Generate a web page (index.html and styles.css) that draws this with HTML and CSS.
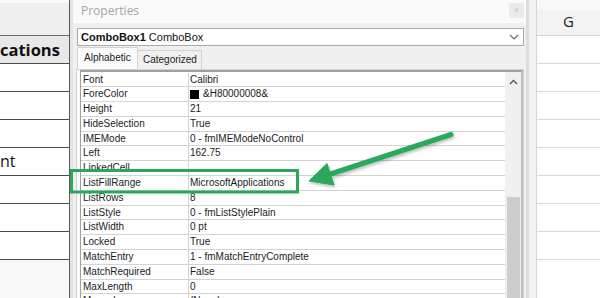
FILE: index.html
```html
<!DOCTYPE html>
<html lang="en">
<head>
    <meta charset="UTF-8">
    <title>Properties - ComboBox1</title>
    <link rel="stylesheet" href="styles.css">
</head>
<body>
    <div class="screen">
        <!-- worksheet, left part -->
        <div class="sheet-left">
            <div class="sheet-top"></div>
            <div class="cell head">cations</div>
            <div class="cell"></div>
            <div class="cell"></div>
            <div class="cell"></div>
            <div class="cell">nt</div>
            <div class="cell"></div>
            <div class="cell"></div>
            <div class="cell"></div>
            <div class="sheet-rest"></div>
        </div>
        <div class="shade"></div>

        <!-- properties window -->
        <div class="dialog">
            <div class="titlebar">
                <span class="title">Properties</span>
                <span class="close">&times;</span>
            </div>
            <div class="dialog-body">
                <div class="combo">
                    <span><b>ComboBox1</b> ComboBox</span>
                    <svg width="10" height="6" viewBox="0 0 10 6"><path d="M1 1 L5 5 L9 1" fill="none" stroke="#6b6b6b" stroke-width="1.2"/></svg>
                </div>
                <div class="tabs">
                    <div class="tab active">Alphabetic</div>
                    <div class="tab">Categorized</div>
                </div>
                <div class="tab-page">
                    <div class="grid-frame">
                        <div class="props">
                            <div class="row"><div class="name">Font</div><div class="value">Calibri</div></div>
                            <div class="row"><div class="name">ForeColor</div><div class="value"><span class="swatch"></span>&amp;H80000008&amp;</div></div>
                            <div class="row"><div class="name">Height</div><div class="value">21</div></div>
                            <div class="row"><div class="name">HideSelection</div><div class="value">True</div></div>
                            <div class="row"><div class="name">IMEMode</div><div class="value">0 - fmIMEModeNoControl</div></div>
                            <div class="row"><div class="name">Left</div><div class="value">162.75</div></div>
                            <div class="row"><div class="name">LinkedCell</div><div class="value"></div></div>
                            <div class="row"><div class="name">ListFillRange</div><div class="value">MicrosoftApplications</div></div>
                            <div class="row"><div class="name">ListRows</div><div class="value">8</div></div>
                            <div class="row"><div class="name">ListStyle</div><div class="value">0 - fmListStylePlain</div></div>
                            <div class="row"><div class="name">ListWidth</div><div class="value">0 pt</div></div>
                            <div class="row"><div class="name">Locked</div><div class="value">True</div></div>
                            <div class="row"><div class="name">MatchEntry</div><div class="value">1 - fmMatchEntryComplete</div></div>
                            <div class="row"><div class="name">MatchRequired</div><div class="value">False</div></div>
                            <div class="row"><div class="name">MaxLength</div><div class="value">0</div></div>
                            <div class="row"><div class="name">MouseIcon</div><div class="value">(None)</div></div>
                        </div>
                        <div class="scrollbar">
                            <svg class="up" width="9" height="6" viewBox="0 0 9 6"><path d="M1 5 L4.5 1.5 L8 5" fill="none" stroke="#555" stroke-width="1.4"/></svg>
                            <div class="thumb"></div>
                        </div>
                    </div>
                </div>
            </div>
        </div>

        <!-- worksheet, right part -->
        <div class="sheet-right">
            <div class="col-strip"></div>
            <div class="col-g">
                <div class="col-head">G</div>
                <div class="gcell"></div>
                <div class="gcell"></div>
                <div class="gcell"></div>
                <div class="gcell"></div>
                <div class="gcell"></div>
                <div class="gcell"></div>
                <div class="gcell"></div>
                <div class="gcell"></div>
            </div>
        </div>

        <!-- green callout -->
        <svg class="callout" width="600" height="298" viewBox="0 0 600 298">
            <defs>
                <filter id="soft" x="-10%" y="-30%" width="120%" height="160%">
                    <feDropShadow dx="1" dy="2" stdDeviation="1.5" flood-color="#000" flood-opacity="0.25"/>
                </filter>
            </defs>
            <rect x="71.5" y="170.5" width="226" height="21.5" fill="none" stroke="#29a85c" stroke-width="3"/>
            <g filter="url(#soft)" fill="#29a85c" stroke="#29a85c">
                <line x1="451" y1="134.5" x2="326" y2="175.5" stroke-width="5" stroke-linecap="round"/>
                <polygon points="309,181 327,163.5 334,185" stroke-width="1" stroke-linejoin="round"/>
            </g>
        </svg>
    </div>
</body>
</html>
```

FILE: styles.css
```css
body {
    margin: 0;
    background: #fff;
    font-family: "Liberation Sans", Arial, sans-serif;
}
.screen {
    position: relative;
    width: 600px;
    height: 298px;
    overflow: hidden;
    display: flex;
}

/* worksheet left */
.sheet-left {
    width: 69px;
    flex: none;
    display: flex;
    flex-direction: column;
    background: #f4f4f4;
    border-right: 1px solid #595959;
}
.sheet-top {
    height: 36px;
    flex: none;
    box-sizing: border-box;
    background: #efefef;
    border-top: 3px solid #fafafa;
    border-bottom: 1px solid #6d6d6d;
}
.cell {
    height: 28px;
    flex: none;
    box-sizing: border-box;
    background: #fff;
    border-bottom: 1px solid #4a4a4a;
    font-family: "Open Sans", "Liberation Sans", sans-serif;
    font-size: 16px;
    line-height: 27px;
    color: #111;
    white-space: nowrap;
}
.cell.head {
    background: #e8e8e8;
    font-weight: bold;
    font-size: 16.5px;
}
.sheet-rest {
    flex: 1;
    background: #f8f8f8;
}
.shade {
    width: 3px;
    flex: none;
    background: #e4e4e4;
}

/* properties window */
.dialog {
    width: 453px;
    flex: none;
    display: flex;
    flex-direction: column;
    background: #f0f0f0;
}
.titlebar {
    height: 23px;
    flex: none;
    display: flex;
    align-items: flex-start;
    justify-content: space-between;
    background: #fafafa;
}
.title {
    margin: 2px 0 0 8px;
    font-family: "Open Sans", sans-serif;
    font-size: 12px;
    color: #a3a3a3;
}
.close {
    width: 15px;
    height: 15px;
    margin: 3px 2px 0 0;
    background: #ebebeb;
    color: #c4c4c4;
    font-size: 10px;
    line-height: 15px;
    text-align: center;
}
.dialog-body {
    flex: 1;
    display: flex;
    flex-direction: column;
    padding: 5px 2px 0 4px;
}
.combo {
    height: 18px;
    box-sizing: border-box;
    display: flex;
    align-items: center;
    justify-content: space-between;
    padding: 0 4px 0 3px;
    background: #fff;
    border: 1px solid #a9a9a9;
    font-size: 11px;
    color: #111;
}
.combo b {
    font-weight: bold;
}
.tabs {
    height: 22px;
    margin-top: 1px;
    display: flex;
    align-items: flex-end;
    font-size: 10px;
    color: #222;
}
.tab {
    box-sizing: border-box;
    height: 19px;
    padding: 3px 4px 0 5px;
    border: 1px solid #d2d2d2;
    border-bottom: none;
    background: #f0f0f0;
}
.tab.active {
    height: 22px;
    width: 61px;
    padding: 4px 0 0 6px;
    background: #fbfbfb;
    margin-right: -1px;
    position: relative;
}
.tab-page {
    flex: 1;
    background: #fbfbfb;
    border: 1px solid #d2d2d2;
    border-bottom: none;
    padding: 0 0 0 3px;
    margin-left: -1px;
}

/* property grid */
.grid-frame {
    height: 100%;
    display: flex;
    background: #fff;
    border-top: 2px solid #a0a0a0;
    border-left: 1px solid #a0a0a0;
    border-right: 2px solid #bdbdbd;
}
.props {
    flex: 1;
    padding-top: 0.5px;
}
.row {
    height: 14.8px;
    box-sizing: border-box;
    display: flex;
    border-bottom: 1px solid #d3d3d3;
    font-size: 10px;
    line-height: 13.8px;
    color: #1b1b1b;
    white-space: nowrap;
}
.name {
    width: 105px;
    padding-left: 2px;
    border-right: 1px solid #d3d3d3;
}
.value {
    flex: 1;
    padding-left: 1px;
    display: flex;
    align-items: center;
}
.swatch {
    width: 9px;
    height: 9px;
    margin-right: 4px;
    background: #000;
}
.scrollbar {
    width: 16px;
    display: flex;
    flex-direction: column;
    align-items: center;
    background: #f0f0f0;
}
.up {
    margin-top: 7px;
}
.thumb {
    width: 13px;
    margin-top: 112px;
    flex: 1;
    background: #cdcdcd;
}

/* worksheet right */
.sheet-right {
    flex: 1;
    display: flex;
    background: #fff;
    border-left: 3px solid #dcdcdc;
}
.col-strip {
    width: 7px;
    background: #f2f2f2;
    border-right: 1px solid #d6d6d6;
}
.col-g {
    flex: 1;
    display: flex;
    flex-direction: column;
    background: #fff;
}
.col-head {
    height: 36px;
    box-sizing: border-box;
    padding-top: 11px;
    background: #f3f3f3;
    border-top: 10px solid #f8f8f8;
    border-bottom: 1px solid #d4d4d4;
    font-family: "Open Sans", sans-serif;
    font-size: 15px;
    line-height: 15px;
    text-align: center;
    color: #222;
    padding-top: 4px;
}
.gcell {
    height: 28px;
    flex: none;
    box-sizing: border-box;
    border-bottom: 1px solid #d9d9d9;
}

/* annotation */
.callout {
    position: absolute;
    left: 0;
    top: 0;
    pointer-events: none;
}
```
